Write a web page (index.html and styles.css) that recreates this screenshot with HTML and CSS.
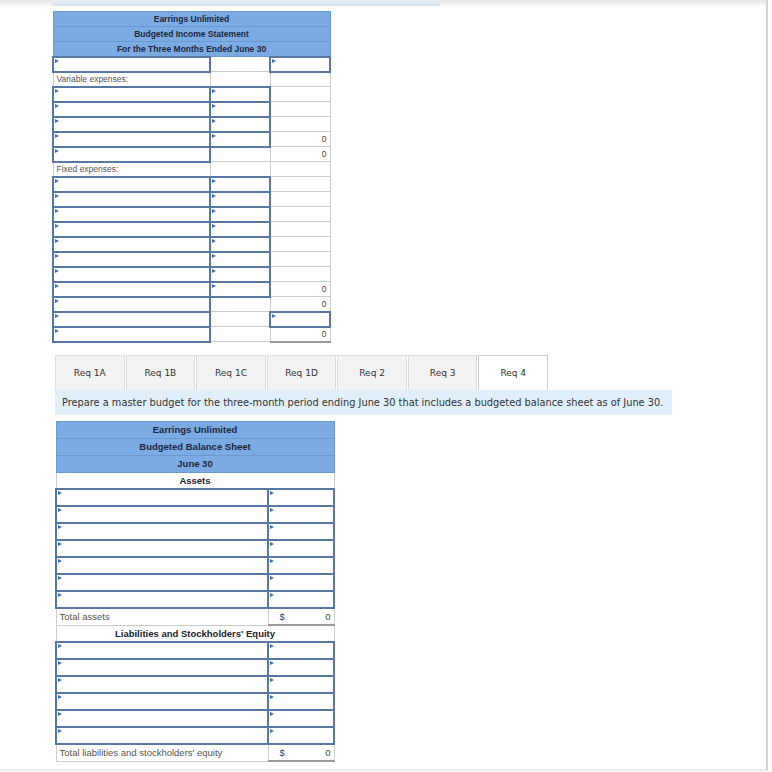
FILE: index.html
```html
<!DOCTYPE html>
<html lang="en">

<head>
    <meta charset="UTF-8">
    <meta name="viewport" content="width=device-width, initial-scale=1.0">
    <title>Earrings Unlimited - Master Budget</title>
    <link rel="stylesheet" href="styles.css">
</head>

<body>
    <div class="frame">
        <!-- top strip -->
        <div class="topbar">
            <div class="topbar-tab"></div>
        </div>

        <!-- Budgeted income statement -->
        <table class="sheet income">
            <colgroup>
                <col class="c-label">
                <col class="c-mid">
                <col class="c-amt">
            </colgroup>
            <tr class="head"><td colspan="3">Earrings Unlimited</td></tr>
            <tr class="head"><td colspan="3">Budgeted Income Statement</td></tr>
            <tr class="head"><td colspan="3">For the Three Months Ended June 30</td></tr>
            <tr><td class="inp"></td><td></td><td class="inp"></td></tr>
            <tr><td class="label">Variable expenses:</td><td></td><td></td></tr>
            <tr><td class="inp"></td><td class="inp"></td><td></td></tr>
            <tr><td class="inp"></td><td class="inp"></td><td></td></tr>
            <tr><td class="inp"></td><td class="inp"></td><td></td></tr>
            <tr><td class="inp"></td><td class="inp"></td><td class="num">0</td></tr>
            <tr><td class="inp"></td><td></td><td class="num">0</td></tr>
            <tr><td class="label">Fixed expenses:</td><td></td><td></td></tr>
            <tr><td class="inp"></td><td class="inp"></td><td></td></tr>
            <tr><td class="inp"></td><td class="inp"></td><td></td></tr>
            <tr><td class="inp"></td><td class="inp"></td><td></td></tr>
            <tr><td class="inp"></td><td class="inp"></td><td></td></tr>
            <tr><td class="inp"></td><td class="inp"></td><td></td></tr>
            <tr><td class="inp"></td><td class="inp"></td><td></td></tr>
            <tr><td class="inp"></td><td class="inp"></td><td></td></tr>
            <tr><td class="inp"></td><td class="inp"></td><td class="num">0</td></tr>
            <tr><td class="inp"></td><td></td><td class="num">0</td></tr>
            <tr><td class="inp"></td><td></td><td class="inp"></td></tr>
            <tr><td class="inp"></td><td></td><td class="num total">0</td></tr>
        </table>

        <!-- requirement tabs -->
        <div class="tabs">
            <div class="tab">Req 1A</div>
            <div class="tab">Req 1B</div>
            <div class="tab">Req 1C</div>
            <div class="tab">Req 1D</div>
            <div class="tab">Req 2</div>
            <div class="tab">Req 3</div>
            <div class="tab active">Req 4</div>
        </div>
        <div class="prompt">Prepare a master budget for the three-month period ending June 30 that includes a budgeted balance sheet as of June 30.</div>

        <!-- Budgeted balance sheet -->
        <table class="sheet balance">
            <colgroup>
                <col class="b-label">
                <col class="b-amt">
            </colgroup>
            <tr class="head"><td colspan="2">Earrings Unlimited</td></tr>
            <tr class="head"><td colspan="2">Budgeted Balance Sheet</td></tr>
            <tr class="head"><td colspan="2">June 30</td></tr>
            <tr class="section"><td colspan="2">Assets</td></tr>
            <tr><td class="inp"></td><td class="inp"></td></tr>
            <tr><td class="inp"></td><td class="inp"></td></tr>
            <tr><td class="inp"></td><td class="inp"></td></tr>
            <tr><td class="inp"></td><td class="inp"></td></tr>
            <tr><td class="inp"></td><td class="inp"></td></tr>
            <tr><td class="inp"></td><td class="inp"></td></tr>
            <tr><td class="inp"></td><td class="inp"></td></tr>
            <tr>
                <td class="label">Total assets</td>
                <td class="total"><div class="money"><span>$</span><span>0</span></div></td>
            </tr>
            <tr class="section"><td colspan="2">Liabilities and Stockholders' Equity</td></tr>
            <tr><td class="inp"></td><td class="inp"></td></tr>
            <tr><td class="inp"></td><td class="inp"></td></tr>
            <tr><td class="inp"></td><td class="inp"></td></tr>
            <tr><td class="inp"></td><td class="inp"></td></tr>
            <tr><td class="inp"></td><td class="inp"></td></tr>
            <tr><td class="inp"></td><td class="inp"></td></tr>
            <tr>
                <td class="label">Total liabilities and stockholders' equity</td>
                <td class="total"><div class="money"><span>$</span><span>0</span></div></td>
            </tr>
        </table>
    </div>
</body>

</html>
```

FILE: styles.css
```css
/* page */
body {
    margin: 0;
    background-color: #fff;
    font-family: "Liberation Sans", Arial, sans-serif;
    color: #333;
}

.frame {
    width: 768px;
    height: 771px;
    border-right: 2px solid #d4d4d4;
    border-bottom: 2px solid #ececec;
    box-sizing: border-box;
}

/* top strip */
.topbar {
    height: 6px;
    padding-left: 52px;
    background: linear-gradient(to bottom, #e6e6e6, #f9f9f9);
}

.topbar-tab {
    width: 388px;
    height: 6px;
    background: linear-gradient(to bottom, #e6eef6, #d8e6f2);
}

/* worksheet tables */
.sheet {
    border-collapse: collapse;
    table-layout: fixed;
}

.sheet td {
    position: relative;
    padding: 0 3px;
    border: 1px solid #cdcdcd;
    line-height: 1;
    white-space: nowrap;
}

.sheet .head td {
    background-color: #7babe2;
    border-color: #6b9ad0;
    color: #1c2840;
    font-weight: bold;
    text-align: center;
}

.sheet td.label {
    color: #555;
}

.sheet td.num {
    text-align: right;
    color: #444;
}

/* editable cell */
.sheet td.inp {
    border: 2px solid #5878a4;
}

.sheet td.inp::before {
    content: "";
    position: absolute;
    top: 1px;
    left: 1px;
    border-top: 2px solid transparent;
    border-bottom: 2px solid transparent;
    border-left: 4px solid #3f6fb3;
}

.sheet td.total {
    border-bottom: 2px solid #9a9a9a;
}

.money {
    display: flex;
    justify-content: space-between;
    padding-left: 8px;
    color: #444;
}

/* income statement */
.income {
    margin: 5px 0 0 52px;
    width: 278px;
    font-size: 8.5px;
}

.income tr {
    height: 15px;
}

.c-label {
    width: 157px;
}

.c-mid,
.c-amt {
    width: 60px;
}

/* tabs */
.tabs {
    display: flex;
    gap: 1px;
    width: 493px;
    margin: 12px 0 0 55px;
}

.tab {
    flex: 1;
    height: 35px;
    box-sizing: border-box;
    display: flex;
    align-items: center;
    justify-content: center;
    background-color: #f3f3f3;
    border: 1px solid #dcdcdc;
    border-bottom: none;
    font-family: "DejaVu Sans", Verdana, sans-serif;
    font-size: 9px;
    color: #333;
}

.tab.active {
    background-color: #fff;
    border-color: #cfcfcf;
}

.prompt {
    margin-left: 55px;
    width: 617px;
    height: 25px;
    box-sizing: border-box;
    padding-left: 7px;
    display: flex;
    align-items: center;
    background-color: #e1effa;
    font-family: "DejaVu Sans", Verdana, sans-serif;
    font-size: 9.8px;
    color: #333;
}

/* balance sheet */
.balance {
    margin: 6px 0 0 55px;
    width: 278px;
    font-size: 9.5px;
}

.balance tr {
    height: 17px;
}

.balance .section td {
    font-weight: bold;
    text-align: center;
    color: #1c2230;
}

.b-label {
    width: 212px;
}

.b-amt {
    width: 66px;
}
```
